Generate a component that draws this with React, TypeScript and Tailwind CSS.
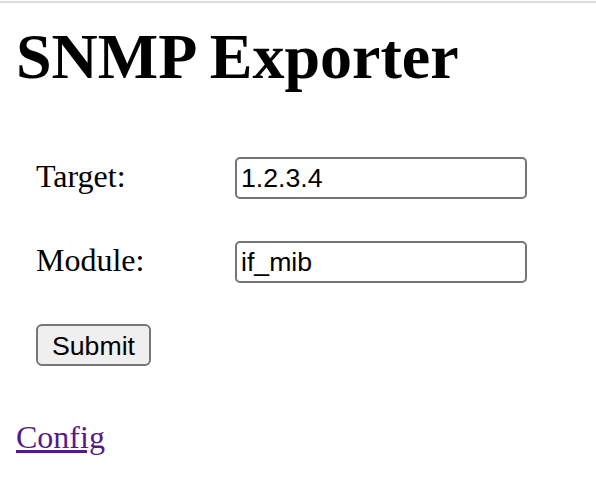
export default function App() {
  return (
    <div className="min-h-[500px] bg-white text-black [font-family:'Liberation_Serif','Times_New_Roman',serif]">
      {/* Top rule */}
      <div className="h-px" />
      <div className="h-[2px] bg-[#dcdcdc]" />

      <div className="px-[16px]">
        <h1 className="mt-[22px] text-[64px] font-bold leading-none">SNMP Exporter</h1>

        <form
          className="mt-[68px] pl-[20px]"
          onSubmit={(e) => e.preventDefault()}
        >
          <div className="grid grid-cols-[199px_292px] items-baseline gap-y-[42px]">
            <label htmlFor="target" className="text-[32px] leading-none">
              Target:
            </label>
            <input
              id="target"
              name="target"
              defaultValue="1.2.3.4"
              className="h-[42px] w-[292px] rounded-[5px] border-2 border-[#767676] bg-white px-[4px] text-[26.67px] text-black [font-family:'Liberation_Sans',Arial,sans-serif] outline-none"
            />
            <label htmlFor="module" className="text-[32px] leading-none">
              Module:
            </label>
            <input
              id="module"
              name="module"
              defaultValue="if_mib"
              className="h-[42px] w-[292px] rounded-[5px] border-2 border-[#767676] bg-white px-[4px] text-[26.67px] text-black [font-family:'Liberation_Sans',Arial,sans-serif] outline-none"
            />
          </div>

          <button
            type="submit"
            className="mt-[41px] h-[42px] w-[115px] rounded-[6px] border-2 border-[#767676] bg-[#efefef] text-[26.67px] text-black [font-family:'Liberation_Sans',Arial,sans-serif]"
          >
            Submit
          </button>
        </form>

        <a
          href="#config"
          className="mt-[55px] block w-fit text-[32px] leading-none text-[#551a8b] underline"
        >
          Config
        </a>
      </div>
    </div>
  );
}
